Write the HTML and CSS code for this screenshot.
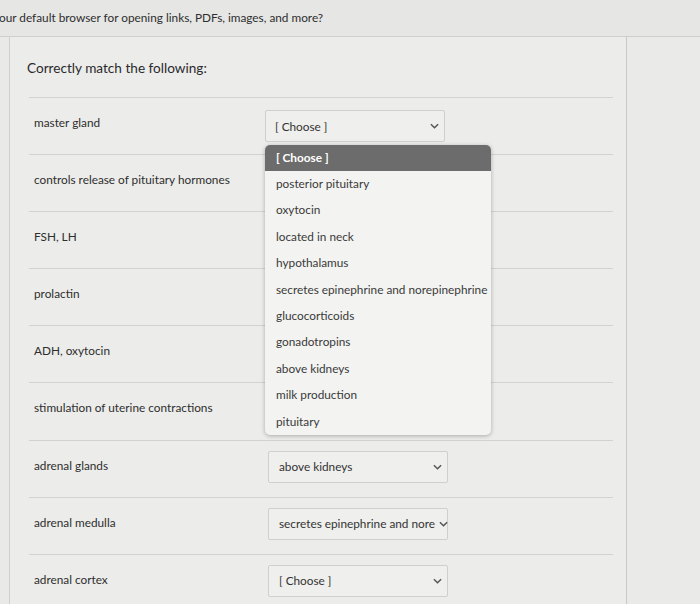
FILE: index.html
```html
<!DOCTYPE html>
<html>
<head>
<meta charset="utf-8">
<link rel="stylesheet" href="styles.css">
</head>
<body>
<div class="topbar"><span class="topbar-text">our default browser for opening links, PDFs, images, and more?</span></div>
<div class="page">
  <div class="panel">
    <div class="title">Correctly match the following:</div>
    <div class="rows">
      <div class="row">
        <div class="label">master gland</div>
        <div class="field">
          <div class="select"><span class="value">[ Choose ]</span><svg class="chev" viewBox="0 0 10 6" width="9" height="6"><path d="M1 1 L5 5 L9 1" fill="none" stroke="#555" stroke-width="1.6"/></svg></div>
          <div class="menu">
            <div class="menu-head">[ Choose ]</div>
            <div class="item">posterior pituitary</div>
            <div class="item">oxytocin</div>
            <div class="item">located in neck</div>
            <div class="item">hypothalamus</div>
            <div class="item">secretes epinephrine and norepinephrine</div>
            <div class="item">glucocorticoids</div>
            <div class="item">gonadotropins</div>
            <div class="item">above kidneys</div>
            <div class="item">milk production</div>
            <div class="item">pituitary</div>
          </div>
        </div>
      </div>
      <div class="row"><div class="label">controls release of pituitary hormones</div></div>
      <div class="row"><div class="label">FSH, LH</div></div>
      <div class="row"><div class="label">prolactin</div></div>
      <div class="row"><div class="label">ADH, oxytocin</div></div>
      <div class="row"><div class="label">stimulation of uterine contractions</div></div>
      <div class="row">
        <div class="label">adrenal glands</div>
        <div class="field low"><div class="select shifted"><span class="value">above kidneys</span><svg class="chev" viewBox="0 0 10 6" width="9" height="6"><path d="M1 1 L5 5 L9 1" fill="none" stroke="#555" stroke-width="1.6"/></svg></div></div>
      </div>
      <div class="row">
        <div class="label">adrenal medulla</div>
        <div class="field low"><div class="select shifted"><span class="value">secretes epinephrine and nore</span><svg class="chev" viewBox="0 0 10 6" width="9" height="6"><path d="M1 1 L5 5 L9 1" fill="none" stroke="#555" stroke-width="1.6"/></svg></div></div>
      </div>
      <div class="row">
        <div class="label">adrenal cortex</div>
        <div class="field low"><div class="select shifted"><span class="value">[ Choose ]</span><svg class="chev" viewBox="0 0 10 6" width="9" height="6"><path d="M1 1 L5 5 L9 1" fill="none" stroke="#555" stroke-width="1.6"/></svg></div></div>
      </div>
    </div>
  </div>
  <div class="side"></div>
</div>
</body>
</html>
```
FILE: styles.css
```css
html, body {
  margin: 0;
  padding: 0;
  height: 604px;
  overflow: hidden;
}
body {
  background: #e9e9e7;
  font-family: Lato, "Open Sans", sans-serif;
  color: #333;
  font-size: 11.8px;
}
.topbar {
  height: 37px;
  border-bottom: 1px solid #cfcfcd;
  background: #e6e6e4;
  display: flex;
  align-items: center;
  padding-bottom: 2px;
  box-sizing: border-box;
}
.topbar-text {
  font-size: 11.8px;
  color: #2e2e2e;
  margin-left: -1px;
}
.page {
  display: flex;
  height: 567px;
}
.panel {
  margin-left: 9px;
  width: 618px;
  border-left: 1px solid #cfcfcd;
  border-right: 1px solid #c8c8c6;
  background: #ececea;
  padding-left: 17px;
  box-sizing: border-box;
}
.side {
  flex: 1;
  background: #eaeae8;
}
.title {
  font-size: 13.6px;
  color: #2a2a2a;
  height: 60px;
  padding-top: 23px;
  box-sizing: border-box;
}
.rows {
  margin-left: 2px;
  width: 584px;
}
.row {
  height: 57.1px;
  border-top: 1px solid #d2d2d0;
  display: flex;
  box-sizing: border-box;
}
.label {
  width: 231px;
  padding-left: 5px;
  padding-top: 17px;
  font-size: 11.8px;
  color: #2e2e2e;
}
.field {
  position: relative;
  padding-top: 12px;
}
.field.low {
  padding-top: 10px;
}
.select {
  width: 180px;
  height: 32px;
  border: 1px solid #cfcfcd;
  border-radius: 2px;
  background: #efefed;
  box-sizing: border-box;
  display: flex;
  align-items: center;
  justify-content: space-between;
  gap: 4px;
  padding: 0 5px 0 9px;
}
.select.shifted {
  margin-left: 3px;
  padding-left: 10px;
}
.value {
  font-size: 11.8px;
  color: #333;
  white-space: nowrap;
}
.chev {
  flex: none;
}
.menu {
  position: absolute;
  left: 0;
  top: 47px;
  width: 226px;
  background: #f3f3f1;
  border-radius: 5px;
  box-shadow: 0 1px 4px rgba(0,0,0,0.28);
  overflow: hidden;
  z-index: 5;
}
.menu-head {
  height: 26px;
  line-height: 26px;
  background: #6c6c6c;
  color: #fff;
  font-weight: bold;
  padding-left: 11px;
  font-size: 11.8px;
}
.item {
  height: 26.4px;
  line-height: 26.4px;
  padding-left: 11px;
  font-size: 11.8px;
  color: #3a3a3a;
  white-space: nowrap;
}
```
